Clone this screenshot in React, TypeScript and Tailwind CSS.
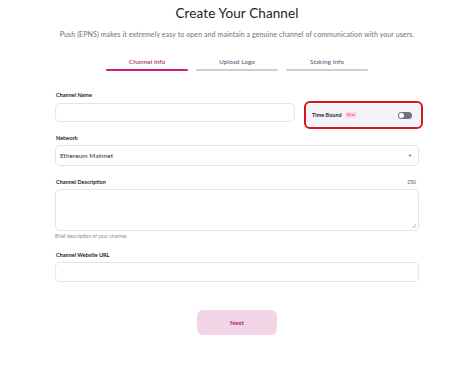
import React from 'react';

const font = { fontFamily: 'Lato, "Open Sans", sans-serif' };

export default function App() {
  return (
    <div className="w-[474px] h-[365px] bg-white overflow-hidden" style={font}>
      <div className="flex flex-col items-center pt-[3px]">
        <h1 className="text-[13.5px] leading-[20px] text-[#1e1e1e] tracking-[0.1px]">Create Your Channel</h1>
        <p className="mt-[7px] text-[7px] leading-[9px] text-[#6b6f7b] tracking-[0.1px]">
          Push (EPNS) makes it extremely easy to open and maintain a genuine channel of communication with your users.
        </p>

        {/* Tabs */}
        <div className="mt-[19px] flex gap-[8px]">
          <div className="w-[82px] flex flex-col items-center">
            <span className="text-[6.5px] leading-[8px] font-medium text-[#b0176e]">Channel Info</span>
            <div className="mt-[3px] h-[2px] w-full rounded-full bg-[#cc1f7c]" />
          </div>
          <div className="w-[82px] flex flex-col items-center">
            <span className="text-[6.5px] leading-[8px] font-medium text-[#62657a]">Upload Logo</span>
            <div className="mt-[3px] h-[2px] w-full rounded-full bg-[#c9ced8]" />
          </div>
          <div className="w-[82px] flex flex-col items-center">
            <span className="text-[6.5px] leading-[8px] font-medium text-[#62657a]">Staking Info</span>
            <div className="mt-[3px] h-[2px] w-full rounded-full bg-[#c9ced8]" />
          </div>
        </div>
      </div>

      <div className="px-[55px] mt-[21px]">
        {/* Channel name + Time bound */}
        <div className="flex items-end gap-[9px]">
          <div className="w-[240px]">
            <div className="text-[5.5px] leading-[7px] font-bold text-[#1e1e1e] pl-[1px]">Channel Name</div>
            <div className="mt-[4px] h-[19px] rounded-[5px] border border-[#e3e5ea]" />
          </div>
          <div className="flex-1 -mr-[4px] -mb-[7px] rounded-[6px] border-[2.5px] border-[#d9141e] p-[1px]">
            <div className="h-[22px] rounded-[4px] bg-[#f4f4f8] flex items-center px-[5px]">
              <span className="text-[5.5px] font-bold text-[#1e1e1e]">Time Bound</span>
              <span className="ml-[3px] px-[2px] rounded-[2px] bg-[#fbd6ee] text-[4px] leading-[6px] text-[#d53c96]">New</span>
              <div className="ml-auto mr-[3px] w-[14px] h-[7px] rounded-full bg-[#6f7180] flex items-center px-[1px]">
                <div className="w-[5px] h-[5px] rounded-full bg-white" />
              </div>
            </div>
          </div>
        </div>

        {/* Network */}
        <div className="mt-[13px]">
          <div className="text-[5.5px] leading-[7px] font-bold text-[#1e1e1e] pl-[1px]">Network</div>
          <div className="mt-[3px] h-[21px] rounded-[5px] border border-[#e3e5ea] flex items-center px-[4px]">
            <span className="text-[6.5px] text-[#333]">Ethereum Mainnet</span>
            <span className="ml-auto mr-[2px] text-[4px] text-[#555]">▼</span>
          </div>
        </div>

        {/* Description */}
        <div className="mt-[13px]">
          <div className="flex justify-between pr-[3px]">
            <span className="text-[5.5px] leading-[7px] font-bold text-[#1e1e1e] pl-[1px]">Channel Description</span>
            <span className="text-[5px] leading-[7px] text-[#555]">250</span>
          </div>
          <div className="mt-[3px] h-[42px] rounded-[5px] border border-[#e3e5ea] relative">
            <svg className="absolute right-[2px] bottom-[2px]" width="4" height="4" viewBox="0 0 4 4">
              <path d="M0 4 L4 0 M2 4 L4 2" stroke="#999" strokeWidth="0.6" />
            </svg>
          </div>
          <div className="mt-[2px] text-[5px] leading-[7px] text-[#8a8d96]">Brief description of your channel.</div>
        </div>

        {/* URL */}
        <div className="mt-[12px]">
          <div className="text-[5.5px] leading-[7px] font-bold text-[#1e1e1e] pl-[1px]">Channel Website URL</div>
          <div className="mt-[3px] h-[20px] rounded-[5px] border border-[#e3e5ea]" />
        </div>

        <div className="mt-[28px] flex justify-center">
          <button className="w-[80px] h-[25px] rounded-[6px] bg-[#f3d4e6] text-[6.5px] font-semibold text-[#a0136a]">
            Next
          </button>
        </div>
      </div>
    </div>
  );
}
